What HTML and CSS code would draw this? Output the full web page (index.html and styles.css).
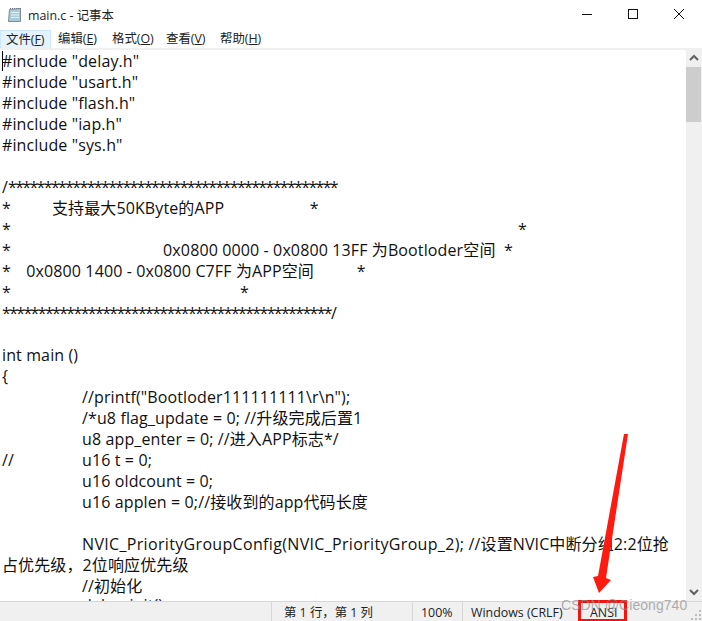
FILE: index.html
```html
<!DOCTYPE html>
<html lang="zh">
<head>
<meta charset="utf-8">
<title>main.c - 记事本</title>
<link rel="stylesheet" href="styles.css">
</head>
<body>
<div class="window">
  <header class="titlebar">
    <svg class="app-icon" width="16" height="16" viewBox="0 0 16 16">
      <path d="M2.5 2.5 L13.5 1.5 V14.5 H1.5 Z" fill="#a9cbd8" stroke="#7c8d92"/>
      <path d="M4 5.5H12M4 8H12M4 10.5H12" stroke="#e4f0f4"/>
      <path d="M3 1.5H14" stroke="#6d7a7f" stroke-dasharray="1 1"/>
    </svg>
    <span class="title">main.c - 记事本</span>
    <div class="controls">
      <svg class="ctl" width="46" height="30" viewBox="0 0 46 30"><path d="M18 14.5H28" stroke="#111"/></svg>
      <svg class="ctl" width="46" height="30" viewBox="0 0 46 30"><rect x="18.5" y="9.5" width="9" height="9" fill="none" stroke="#111"/></svg>
      <svg class="ctl" width="46" height="30" viewBox="0 0 46 30"><path d="M18 9L28 19M28 9L18 19" stroke="#111"/></svg>
    </div>
  </header>
  <nav class="menubar">
    <span class="menu menu-active">文件(<u>F</u>)</span>
    <span class="menu">编辑(<u>E</u>)</span>
    <span class="menu">格式(<u>O</u>)</span>
    <span class="menu">查看(<u>V</u>)</span>
    <span class="menu">帮助(<u>H</u>)</span>
  </nav>
  <main class="editor">
    <pre class="text"><span class="caret"></span>#include "delay.h"
#include "usart.h"
#include "flash.h"
#include "iap.h"
#include "sys.h"

/<span class="stars">**********************************************</span>
<span class="stars">*</span>          支持最大50KByte的APP                    <span class="stars">*</span>
<span class="stars">*</span>                                                                                                                       <span class="stars">*</span>
<span class="stars">*</span>                                    0x0800 0000 - 0x0800 13FF 为Bootloder空间  <span class="stars">*</span>
<span class="stars">*</span>    0x0800 1400 - 0x0800 C7FF 为APP空间          <span class="stars">*</span>
<span class="stars">*</span>                                                      <span class="stars">*</span>
<span class="stars">**********************************************</span>/

int main ()
{
	//printf("Bootloder111111111\r\n");
	/*u8 flag_update = 0; //升级完成后置1
	u8 app_enter = 0; //进入APP标志*/
//	u16 t = 0;
	u16 oldcount = 0;
	u16 applen = 0;//接收到的app代码长度

	<span class="wide">NVIC_PriorityGroupConfig(NVIC_PriorityGroup_2);</span> //设置NVIC中断分组2:2位抢
占优先级，2位响应优先级
	//初始化
	<span class="cutline">delay_init();</span></pre>
    <div class="scrollbar">
      <div class="sb-btn">
        <svg width="16" height="17" viewBox="0 0 16 17"><path d="M4 10L8 6L12 10" fill="none" stroke="#606060" stroke-width="2"/></svg>
      </div>
      <div class="sb-track"><div class="sb-thumb"></div></div>
      <div class="sb-btn">
        <svg width="16" height="17" viewBox="0 0 16 17"><path d="M4 6L8 10L12 6" fill="none" stroke="#606060" stroke-width="2"/></svg>
      </div>
    </div>
  </main>
  <footer class="statusbar">
    <span class="cell cell-pos">第 1 行，第 1 列</span>
    <span class="cell cell-zoom">100%</span>
    <span class="cell cell-eol">Windows (CRLF)</span>
    <span class="cell cell-enc">ANSI</span>
    <svg class="grip" width="12" height="12" viewBox="0 0 12 12"><path d="M9 1h2v2H9zM5 5h2v2H5zM9 5h2v2H9zM1 9h2v2H1zM5 9h2v2H5zM9 9h2v2H9z" fill="#bdbdbd"/></svg>
  </footer>
  <div class="redbox"></div>
  <svg class="arrow" width="50" height="170" viewBox="0 0 50 170"><polygon points="34,1 38,1 16,145 21,147 9,160 3,144 8,143" fill="#fe1a0f"/></svg>
  <span class="watermark">CSDN @Cieong740</span>
</div>
</body>
</html>
```

FILE: styles.css
```css
* { box-sizing: border-box; }
html, body { margin: 0; padding: 0; }
body { width: 702px; height: 621px; overflow: hidden; background: #fff; }
.window {
  position: relative;
  width: 702px;
  height: 621px;
  display: flex;
  flex-direction: column;
  font-family: "Open Sans", "Noto Sans CJK SC", sans-serif;
  color: #111;
  overflow: hidden;
}
.titlebar { height: 30px; display: flex; align-items: center; padding-left: 7px; flex: none; }
.app-icon { flex: none; }
.title { margin-left: 5px; font-size: 12.4px; color: #222; }
.controls { margin-left: auto; display: flex; }
.ctl { display: block; }
.menubar {
  height: 20px;
  flex: none;
  display: flex;
  font-size: 12.4px;
  border-bottom: 2px solid #f0f0f0;
  color: #222;
}
.menu { padding: 0 7px; line-height: 18px; width: 54px; white-space: nowrap; }
.menu-active { background: #e5f3ff; border: 1px solid #cce8ff; border-bottom: 0; line-height: 17px; padding: 0 5px; width: 51px; }
.menu u { text-underline-offset: 1px; }
.editor { flex: 1; min-height: 0; display: flex; }
.text {
  position: relative;
  flex: 1;
  margin: 0;
  padding: 1px 0 0 2px;
  font-family: "Open Sans", "Noto Sans CJK SC", sans-serif;
  font-size: 16px;
  letter-spacing: 0.12px;
  line-height: 21px;
  tab-size: 80px;
  white-space: pre;
  overflow: hidden;
  color: #111;
}
.stars { letter-spacing: -1.66px; }
.wide { letter-spacing: 0.33px; }
.cutline { position: relative; top: -2px; }
.caret { position: absolute; left: 2px; top: 1px; width: 1px; height: 20px; background: #000; }
.scrollbar { width: 16px; flex: none; background: #f0f0f0; display: flex; flex-direction: column; }
.sb-btn { height: 17px; flex: none; }
.sb-btn svg { display: block; }
.sb-track { flex: 1; }
.sb-thumb { width: 15px; height: 55px; background: #cdcdcd; }
.statusbar {
  position: relative;
  height: 20px;
  flex: none;
  display: flex;
  background: #f0f0f0;
  border-top: 1px solid #d7d7d7;
  font-size: 12.4px;
  line-height: 21px;
  color: #222;
  padding-left: 271px;
}
.cell { border-left: 1px solid #d7d7d7; padding-left: 12px; white-space: nowrap; }
.cell-pos { width: 141px; }
.cell-zoom { width: 50px; padding-left: 8px; }
.cell-eol { width: 117px; padding-left: 8px; }
.cell-enc { padding-left: 11px; border-left: 0; }
.grip { position: absolute; right: 0; bottom: 0; }
.redbox { position: absolute; left: 578px; top: 600px; width: 49px; height: 21px; border: 3px solid #f5130c; border-bottom-width: 2px; }
.arrow { position: absolute; left: 590px; top: 433px; }
.watermark { position: absolute; left: 561px; top: 597px; font-family: "Liberation Sans", sans-serif; font-size: 14px; letter-spacing: 0.05px; white-space: nowrap; color: rgba(140,140,140,0.7); }
```
